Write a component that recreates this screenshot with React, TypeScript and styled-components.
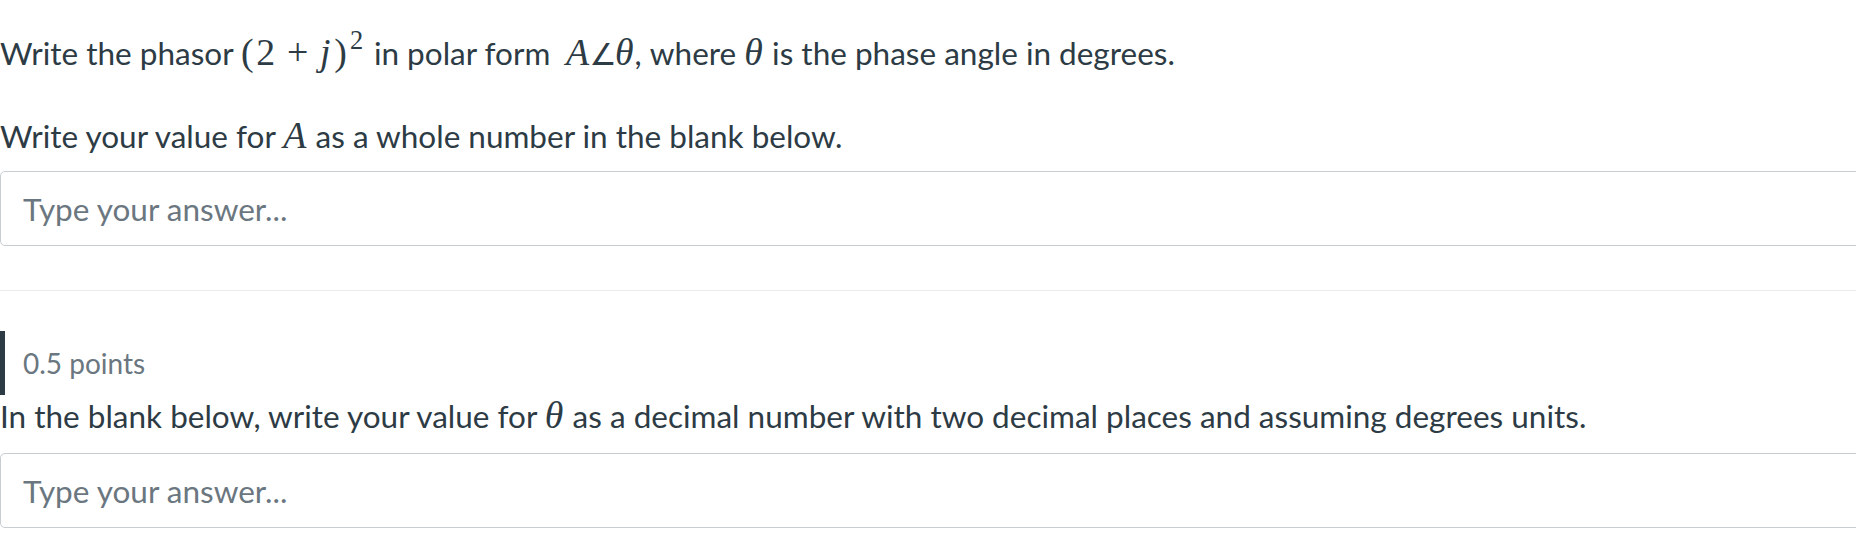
import React from "react";
import styled, { createGlobalStyle } from "styled-components";

const GlobalStyle = createGlobalStyle`
  html, body {
    margin: 0;
    padding: 0;
    background: #ffffff;
    overflow: hidden;
  }
  body {
    font-family: Lato, "Open Sans", "Noto Sans", sans-serif;
    color: #2d3b45;
  }
`;

const Page = styled.main`
  width: 1900px;
  display: flex;
  flex-direction: column;
`;

const Question = styled.section`
  display: flex;
  flex-direction: column;
`;

const Text = styled.p<{ $top: number }>`
  margin: ${(p) => p.$top}px 0 0;
  font-size: 31.5px;
  line-height: 42px;
  white-space: nowrap;
`;

const Math = styled.span<{ $spaced?: boolean; $lead?: number }>`
  font-family: "Liberation Serif", "DejaVu Serif", serif;
  font-size: 1.2em;
  line-height: 1;
  letter-spacing: ${(p) => (p.$spaced ? "0.07em" : "0")};
  margin-left: ${(p) => p.$lead ?? 0}em;
`;

const MathVar = styled.i`
  font-style: italic;
  padding-right: 0.03em;
`;

const Angle = styled.span`
  font-family: "DejaVu Sans", "Liberation Serif", serif;
  font-size: 0.8em;
  margin: 0 -0.06em 0 -0.02em;
`;

const Op = styled.span`
  margin: 0 0.24em;
`;

const Sup = styled.sup`
  font-size: 0.7em;
  line-height: 0;
  vertical-align: 0.62em;
  margin-left: 0.02em;
`;

const AnswerInput = styled.input<{ $top: number }>`
  margin-top: ${(p) => p.$top}px;
  box-sizing: border-box;
  width: 100%;
  height: 75px;
  padding: 0 22px;
  border: 1px solid #c7cdd1;
  border-radius: 5px;
  background: #ffffff;
  font-family: Lato, "Open Sans", sans-serif;
  font-size: 31.5px;
  color: #2d3b45;
  outline: none;
  &::placeholder {
    color: #6b7780;
    opacity: 1;
  }
`;

const Divider = styled.hr`
  margin: 44px 0 0;
  border: none;
  height: 1px;
  background: #ebebeb;
`;

const PointsHeader = styled.div`
  margin-top: 40px;
  height: 64px;
  display: flex;
  align-items: center;
  border-left: 5px solid #2d3b45;
  padding-left: 18px;
  font-size: 28px;
  color: #6b7780;
`;

export default function App() {
  return (
    <>
      <GlobalStyle />
      <Page>
        <Question>
          <Text $top={32}>
            Write the phasor{" "}
            <Math $spaced>
              (2<Op>+</Op>
              <MathVar>j</MathVar>)<Sup>2</Sup>
            </Math>{" "}
            in polar form{" "}
            <Math $lead={0.2}>
              <MathVar>A</MathVar>
              <Angle>∠</Angle>
              <MathVar>θ</MathVar>
            </Math>
            , where{" "}
            <Math>
              <MathVar>θ</MathVar>
            </Math>{" "}
            is the phase angle in degrees.
          </Text>
          <Text $top={41}>
            Write your value for{" "}
            <Math>
              <MathVar>A</MathVar>
            </Math>{" "}
            as a whole number in the blank below.
          </Text>
          <AnswerInput $top={14} type="text" placeholder="Type your answer..." />
        </Question>
        <Divider />
        <Question>
          <PointsHeader>0.5 points</PointsHeader>
          <Text $top={0}>
            In the blank below, write your value for{" "}
            <Math>
              <MathVar>θ</MathVar>
            </Math>{" "}
            as a decimal number with two decimal places and assuming degrees units.
          </Text>
          <AnswerInput $top={16} type="text" placeholder="Type your answer..." />
        </Question>
      </Page>
    </>
  );
}
